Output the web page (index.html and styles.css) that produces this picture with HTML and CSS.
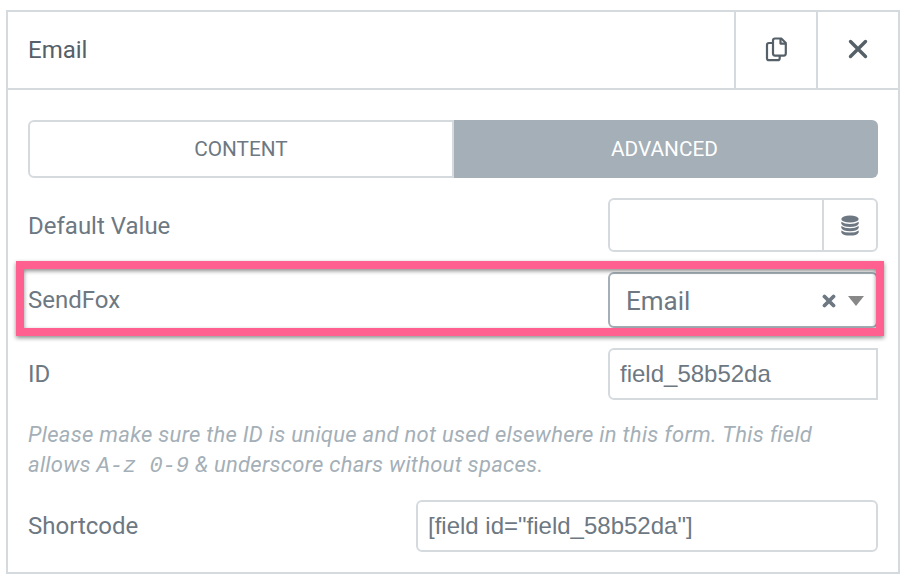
FILE: index.html
```html
<!DOCTYPE html>
<html lang="en">
<head>
    <meta charset="UTF-8">
    <meta name="viewport" content="width=device-width, initial-scale=1.0">
    <title>Form Field - Email</title>
    <link rel="stylesheet" href="styles.css">
</head>
<body>

    <section class="panel">
        <header class="panel-header">
            <h1 class="panel-title">Email</h1>
            <button class="tool" type="button" aria-label="Duplicate">
                <svg class="icon-copy" viewBox="0 0 22 25" width="22" height="25">
                    <path d="M7.500 6H4A2 2 0 0 0 2 8V21.200a2 2 0 0 0 2 2h8.700a2 2 0 0 0 2-2V19"/>
                    <path d="M10 1.500H16.300L20.800 6V16.600a2 2 0 0 1-2 2h-8.800a2 2 0 0 1-2-2V3.500a2 2 0 0 1 2-2z"/>
                    <path d="M15.500 1.500V6.600H20.800"/>
                </svg>
            </button>
            <button class="tool" type="button" aria-label="Remove">
                <svg class="icon-close" viewBox="0 0 20 20" width="20" height="20">
                    <path d="M2.500 2.500L17.500 17.500M17.500 2.500L2.500 17.500"/>
                </svg>
            </button>
        </header>

        <div class="panel-body">
            <div class="tabs">
                <button class="tab" type="button">CONTENT</button>
                <button class="tab active" type="button">ADVANCED</button>
            </div>

            <div class="row">
                <label class="dynamic-label" for="default-value">Default Value</label>
                <div class="input-group">
                    <input id="default-value" type="text">
                    <button class="dynamic" type="button" aria-label="Dynamic Tags">
                        <svg viewBox="0 0 18 21" width="18" height="21">
                            <ellipse cx="9" cy="4" rx="8.700" ry="3.600"/>
                            <path d="M.3 6.800Q3.500 9 9 9T17.700 6.800V8.800Q16 12 9 12T.3 8.800z"/>
                            <path d="M.3 11.100Q3.500 13.300 9 13.300T17.700 11.100V13.100Q16 16.300 9 16.300T.3 13.100z"/>
                            <path d="M.3 15.400Q3.500 17.600 9 17.600T17.700 15.400V17.400Q16 20.600 9 20.600T.3 17.400z"/>
                        </svg>
                    </button>
                </div>
            </div>

            <div class="row highlighted">
                <span>SendFox</span>
                <div class="select">
                    <span class="select-value">Email</span>
                    <svg class="clear" viewBox="0 0 14 14" width="14" height="14">
                        <path d="M2.500 2.500L11.500 11.500M11.500 2.500L2.500 11.500"/>
                    </svg>
                    <span class="arrow"></span>
                </div>
            </div>

            <div class="row">
                <label for="field-id">ID</label>
                <input class="field-id" id="field-id" type="text" value="field_58b52da">
            </div>

            <p class="description">
                <span>Please make sure the ID is unique and not used elsewhere in this form. This field</span><br>
                <span>allows</span> <code>A-z 0-9</code> <span>&amp; underscore chars without spaces.</span>
            </p>

            <div class="row">
                <label for="shortcode">Shortcode</label>
                <input class="shortcode" id="shortcode" type="text" value='[field id="field_58b52da"]' readonly>
            </div>
        </div>
    </section>

</body>
</html>
```
FILE: styles.css
```css
* {
    box-sizing: border-box;
}

body {
    margin: 0;
    padding: 10px 8px 8px 6px;
    background-color: #fff;
    color: #6d7882;
    font-family: Roboto, sans-serif;
    font-size: 24px;
}

button {
    margin: 0;
    padding: 0;
    border: none;
    background: none;
    color: inherit;
    font-family: inherit;
}

svg {
    display: block;
}

.panel {
    border: 2px solid #d5dadf;
}

/* Header */
.panel-header {
    display: flex;
    height: 78px;
    border-bottom: 2px solid #d5dadf;
    color: #556068;
}

.panel-title {
    flex: 1;
    margin: 0;
    padding-left: 20px;
    font-size: 24px;
    font-weight: 400;
    line-height: 76px;
}

.tool {
    display: flex;
    align-items: center;
    justify-content: center;
    width: 82px;
    padding-bottom: 2px;
    border-left: 2px solid #d5dadf;
}

.icon-copy,
.icon-close {
    fill: none;
    stroke: #556068;
    stroke-width: 2.2;
    stroke-linejoin: round;
}

.icon-close {
    stroke-width: 3.4;
    stroke-linecap: round;
}

/* Body */
.panel-body {
    display: flex;
    flex-direction: column;
    gap: 20px;
    padding: 30px 20px 20px;
}

.tabs {
    display: grid;
    grid-template-columns: 426px 1fr;
    height: 58px;
}

.tab {
    border: 2px solid #d5dadf;
    border-radius: 6px 0 0 6px;
    font-size: 20.8px;
}

.tab.active {
    padding-right: 3px;
    border: none;
    border-radius: 0 6px 6px 0;
    background-color: #a4afb7;
    color: #fff;
}

.row {
    display: flex;
    align-items: center;
    justify-content: space-between;
}

.dynamic-label {
    padding-top: 2px;
}

input {
    height: 52px;
    padding: 0 10px;
    border: 2px solid #d5dadf;
    border-radius: 6px;
    background: #fff;
    color: #6d7882;
    font-family: "Liberation Sans", Arial, sans-serif;
    font-size: 24px;
    outline: none;
}

.input-group {
    display: flex;
    width: 270px;
    height: 54px;
    border: 2px solid #d5dadf;
    border-radius: 6px;
}

.input-group input {
    flex: 1;
    min-width: 0;
    height: auto;
    border: none;
}

.dynamic {
    display: flex;
    align-items: center;
    justify-content: center;
    width: 54px;
    border-left: 2px solid #d5dadf;
    fill: #6d7882;
}

.select {
    display: flex;
    align-items: center;
    width: 270px;
    height: 56px;
    padding: 2px 12px 0 16px;
    border: 2px solid #a4afb7;
    border-radius: 6px;
    font-size: 26px;
}

.select-value {
    flex: 1;
}

.clear {
    margin-right: 12px;
    stroke: #6d7882;
    stroke-width: 3.8;
    stroke-linecap: round;
}

.arrow {
    border: 8px solid transparent;
    border-top: 10px solid #888;
    border-bottom: none;
}

/* Pink frame around the row */
.highlighted {
    position: relative;
}

.highlighted::after {
    content: "";
    position: absolute;
    inset: -11px -6px -8px -12px;
    border: 8px solid #ff6090;
    filter: drop-shadow(0 2px 2px rgba(0, 0, 0, 0.45));
    pointer-events: none;
}

.field-id {
    width: 270px;
    border-radius: 6px 0 0 6px;
}

.description {
    margin: 0;
    color: #a4afb7;
    font-size: 22px;
    font-style: italic;
    letter-spacing: 0.28px;
    line-height: 30px;
}

.description code {
    font-family: "Liberation Mono", monospace;
    font-size: 22px;
    letter-spacing: 0;
    line-height: 1;
}

.shortcode {
    width: 462px;
}
```
